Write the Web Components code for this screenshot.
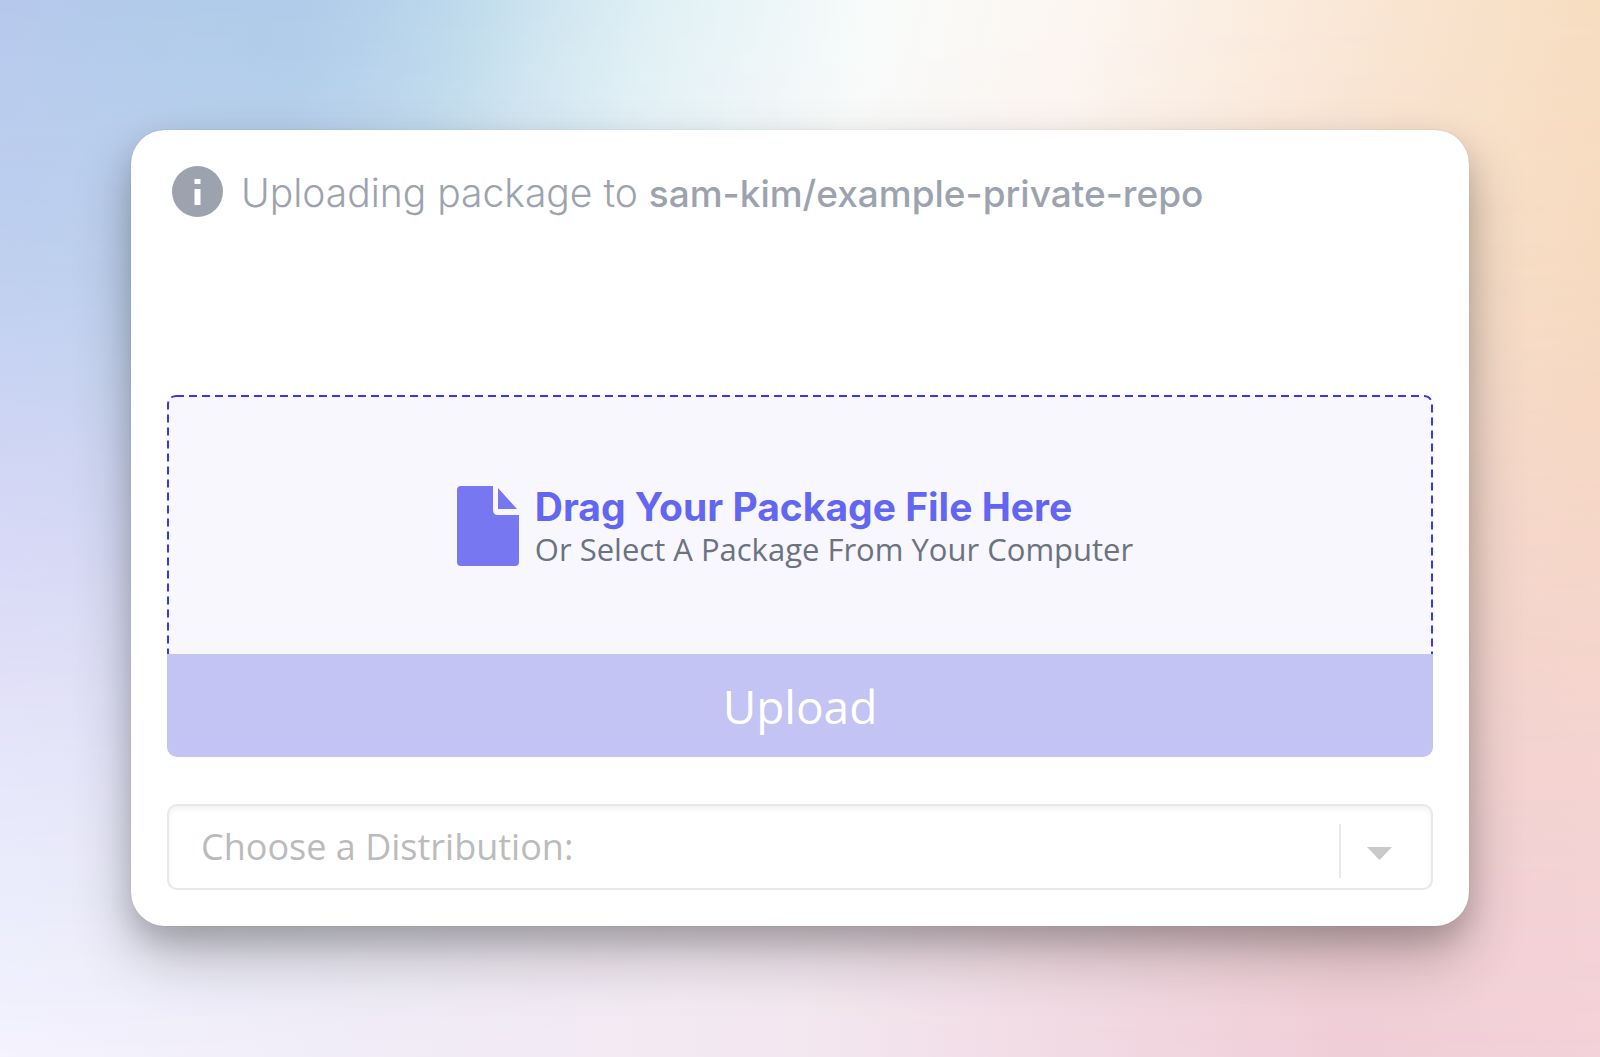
<!DOCTYPE html>
<html lang="en">
<head>
<meta charset="utf-8">
<meta name="viewport" content="width=device-width, initial-scale=1">
<title>Upload package</title>
<style>
  html, body { margin: 0; min-height: 100%; }
  body { font-family: "Open Sans", "Noto Sans", sans-serif; }
</style>
</head>
<body>
<gradient-stage>
  <upload-card>
    <info-banner slot="header">Uploading package to <b>sam-kim/example-private-repo</b></info-banner>
    <file-drop>
      <span slot="title">Drag Your Package File Here</span>
      <span slot="hint">Or Select A Package From Your Computer</span>
    </file-drop>
    <upload-button>Upload</upload-button>
    <distro-select slot="footer" placeholder="Choose a Distribution:"></distro-select>
  </upload-card>
</gradient-stage>

<script>
class BaseElement extends HTMLElement {
  connectedCallback() {
    if (this.shadowRoot) return;
    this.attachShadow({ mode: "open" }).innerHTML = this.render();
  }
}

customElements.define("gradient-stage", class extends BaseElement {
  render() {
    return `
      <style>
        :host {
          display: flex; align-items: flex-start; justify-content: center;
          box-sizing: border-box; min-height: 100vh; padding: 130px 131px;
          position: relative; isolation: isolate; overflow: hidden;
          background: linear-gradient(90deg, #f4f3fe 0%, #f1edf8 20%, #f3e7f0 50%, #f1d6e0 72%, #f0ced8 84%, #f4d2da 100%);
        }
        :host::before {
          content: ""; position: absolute; inset: 0; z-index: -1;
          background:
            radial-gradient(ellipse 260px 220px at 270px 40px, #abcbe988 0%, #abcbe900 100%),
            radial-gradient(ellipse 300px 400px at 0 64%, #c3c0f0 0%, #c3c0f000 100%),
            linear-gradient(102deg, #b6c9ed 0%, #b4cdea 17%, #c3deed 26%, #e0f0f5 36%, #f8fbfa 48%, #fcf6f1 59%, #f9e4d0 77%, #f6dbba 92%, #f5dab8 100%);
          -webkit-mask: linear-gradient(#000 0%, #000d 25%, #0008 52%, #0004 72%, #0000 100%);
          mask: linear-gradient(#000 0%, #000d 25%, #0008 52%, #0004 72%, #0000 100%);
        }
      </style>
      <slot></slot>`;
  }
});

customElements.define("upload-card", class extends BaseElement {
  render() {
    return `
      <style>
        :host {
          display: flex; flex-direction: column; flex: 1; box-sizing: border-box;
          padding: 36px; border-radius: 34px; background: #fff;
          box-shadow: 0 0 1px rgba(0,0,0,.2), 0 30px 60px rgba(0,0,0,.24), 0 14px 28px rgba(0,0,0,.15);
        }
        main { display: flex; flex-direction: column; margin: 178px 0 47px; }
      </style>
      <slot name="header"></slot>
      <main><slot></slot></main>
      <slot name="footer"></slot>`;
  }
});

customElements.define("info-banner", class extends BaseElement {
  render() {
    return `
      <style>
        :host {
          display: flex; align-items: center; gap: 18px; padding-left: 5px;
          color: #9ca3af; font: 300 39px/50px Inter, "Open Sans", sans-serif;
        }
        svg { width: 51px; height: 51px; flex: none; }
        p { margin: 2px 0 -2px; }
        ::slotted(b) { font-size: 37px; font-weight: 500; }
      </style>
      <svg viewBox="0 0 51 51" aria-hidden="true">
        <circle cx="25.500" cy="25.500" r="25.500" fill="#9ca3af"/>
        <path fill="#fff" d="M22.500 13h6v5h-6zM22.500 23h6v16h-6z"/>
      </svg>
      <p><slot></slot></p>`;
  }
});

customElements.define("file-drop", class extends BaseElement {
  render() {
    return `
      <style>
        :host { display: block; }
        label {
          display: flex; align-items: center; justify-content: center; gap: 16px;
          position: relative; height: 259px; padding: 2px 10px 0 0; box-sizing: border-box;
          background: #f8f7fe; border-radius: 8px 8px 0 0; overflow: hidden; cursor: pointer;
        }
        input { position: absolute; inset: 0; opacity: 0; cursor: pointer; }
        .outline { position: absolute; inset: 0; width: 100%; height: 100%; pointer-events: none; }
        .outline rect { width: calc(100% - 2px); height: calc(100% + 40px); }
        .file { width: 62px; height: 80px; flex: none; }
        .text { display: flex; flex-direction: column; padding-top: 4px; }
        .title { font: 700 39px/42px Inter, "Open Sans", sans-serif; color: #6366f1; }
        .hint { font-size: 31px; line-height: 42px; color: #6b7280; }
      </style>
      <label>
        <input type="file">
        <svg class="outline" aria-hidden="true">
          <rect x="1" y="1" rx="8" fill="none" stroke="#3a35f0" stroke-width="2" stroke-dasharray="8 5"/>
        </svg>
        <svg class="file" viewBox="0 0 62 80" aria-hidden="true">
          <path fill="#7778f1" d="M4 0h32v24q0 5 5 5h21v47q0 4-4 4H4q-4 0-4-4V4q0-4 4-4zM41 2l19 21H41z"/>
        </svg>
        <span class="text">
          <span class="title"><slot name="title"></slot></span>
          <span class="hint"><slot name="hint"></slot></span>
        </span>
      </label>`;
  }
});

customElements.define("upload-button", class extends BaseElement {
  render() {
    return `
      <style>
        :host { display: block; }
        button {
          display: block; width: 100%; height: 103px; margin: 0; padding: 0; border: 0;
          border-radius: 0 0 10px 10px; background: #c4c4f4; color: #fff;
          font: 400 46px/64px "Open Sans", sans-serif;
        }
      </style>
      <button type="button"><slot></slot></button>`;
  }
});

customElements.define("distro-select", class extends BaseElement {
  render() {
    const text = this.getAttribute("placeholder");
    return `
      <style>
        :host { display: grid; align-items: center; }
        select, .mark { grid-area: 1 / 1; }
        select {
          appearance: none; -webkit-appearance: none; width: 100%; height: 86px; margin: 0;
          padding: 0 110px 0 32px; box-sizing: border-box;
          border: 2px solid #e8e8e8; border-radius: 10px; background: #fff; color: #bbb;
          box-shadow: inset 0 3px 5px rgba(0,0,0,.05);
          font: 400 36px/50px "Open Sans", sans-serif;
        }
        .mark {
          justify-self: end; display: flex; align-items: center; gap: 26px;
          padding: 8px 41px 0 0; pointer-events: none;
        }
        .mark i { width: 2px; height: 54px; background: #e8e8e8; }
        .mark svg { width: 25px; height: 13px; margin-top: 4px; }
      </style>
      <select aria-label="${text}"><option>${text}</option></select>
      <span class="mark"><i></i>
        <svg viewBox="0 0 25 13" aria-hidden="true"><path fill="#c9c9c9" d="M0 0h25L12.500 13z"/></svg>
      </span>`;
  }
});
</script>
</body>
</html>
